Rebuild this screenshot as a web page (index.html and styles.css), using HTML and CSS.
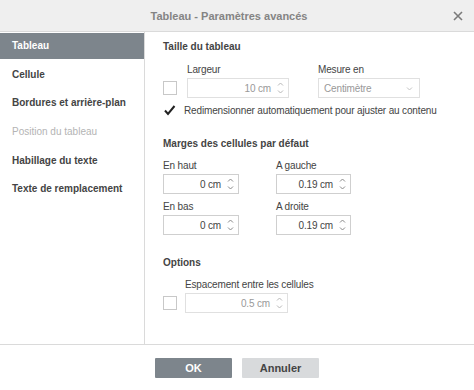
FILE: index.html
```html
<!DOCTYPE html>
<html lang="fr">
<head>
    <meta charset="UTF-8">
    <title>Tableau - Paramètres avancés</title>
    <link rel="stylesheet" href="styles.css">
</head>
<body>
    <div class="dialog">
        <div class="titlebar">
            <span class="title">Tableau - Paramètres avancés</span>
            <span class="close">
                <svg width="10" height="10" viewBox="0 0 10 10"><path d="M1 1L9 9M9 1L1 9" stroke="#7a7a7a" stroke-width="1.6"/></svg>
            </span>
        </div>

        <div class="main">
            <ul class="menu">
                <li class="active">Tableau</li>
                <li>Cellule</li>
                <li>Bordures et arrière-plan</li>
                <li class="disabled">Position du tableau</li>
                <li>Habillage du texte</li>
                <li>Texte de remplacement</li>
            </ul>

            <div class="panel">
                <h3>Taille du tableau</h3>
                <div class="size-row">
                    <span class="check"></span>
                    <div class="field w102">
                        <label>Largeur</label>
                        <div class="spin disabled"><span class="val">10 cm</span>
                            <svg class="arrows" width="7" height="14" viewBox="0 0 7 14"><path d="M1 4.5L3.5 2L6 4.5M1 9.5L3.5 12L6 9.5" fill="none" stroke="#b8b8b8" stroke-width="1"/></svg>
                        </div>
                    </div>
                    <div class="field w102">
                        <label>Mesure en</label>
                        <div class="combo disabled"><span>Centimètre</span>
                            <svg width="7" height="5" viewBox="0 0 7 5"><path d="M1 1.5L3.5 4L6 1.5" fill="none" stroke="#c4c4c4" stroke-width="1"/></svg>
                        </div>
                    </div>
                </div>
                <div class="check-row">
                    <span class="check checked">
                        <svg width="13" height="13" viewBox="0 0 13 13"><path d="M2 6.5L5 10L11.5 2" fill="none" stroke="#222" stroke-width="2"/></svg>
                    </span>
                    <span>Redimensionner automatiquement pour ajuster au contenu</span>
                </div>

                <h3 class="second">Marges des cellules par défaut</h3>
                <div class="margins">
                    <div class="field">
                        <label>En haut</label>
                        <div class="spin"><span class="val">0 cm</span>
                            <svg class="arrows" width="7" height="14" viewBox="0 0 7 14"><path d="M1 4.5L3.5 2L6 4.5M1 9.5L3.5 12L6 9.5" fill="none" stroke="#8a8a8a" stroke-width="1"/></svg>
                        </div>
                    </div>
                    <div class="field">
                        <label>A gauche</label>
                        <div class="spin"><span class="val">0.19 cm</span>
                            <svg class="arrows" width="7" height="14" viewBox="0 0 7 14"><path d="M1 4.5L3.5 2L6 4.5M1 9.5L3.5 12L6 9.5" fill="none" stroke="#8a8a8a" stroke-width="1"/></svg>
                        </div>
                    </div>
                    <div class="field">
                        <label>En bas</label>
                        <div class="spin"><span class="val">0 cm</span>
                            <svg class="arrows" width="7" height="14" viewBox="0 0 7 14"><path d="M1 4.5L3.5 2L6 4.5M1 9.5L3.5 12L6 9.5" fill="none" stroke="#8a8a8a" stroke-width="1"/></svg>
                        </div>
                    </div>
                    <div class="field">
                        <label>A droite</label>
                        <div class="spin"><span class="val">0.19 cm</span>
                            <svg class="arrows" width="7" height="14" viewBox="0 0 7 14"><path d="M1 4.5L3.5 2L6 4.5M1 9.5L3.5 12L6 9.5" fill="none" stroke="#8a8a8a" stroke-width="1"/></svg>
                        </div>
                    </div>
                </div>

                <h3 class="third">Options</h3>
                <div class="options-row">
                    <span class="check"></span>
                    <div class="field w103">
                        <label class="nowrap">Espacement entre les cellules</label>
                        <div class="spin disabled"><span class="val">0.5 cm</span>
                            <svg class="arrows" width="7" height="14" viewBox="0 0 7 14"><path d="M1 4.5L3.5 2L6 4.5M1 9.5L3.5 12L6 9.5" fill="none" stroke="#b8b8b8" stroke-width="1"/></svg>
                        </div>
                    </div>
                </div>
            </div>
        </div>

        <div class="footer">
            <button class="primary">OK</button>
            <button>Annuler</button>
        </div>
    </div>
</body>
</html>
```

FILE: styles.css
```css
body {
    margin: 0;
    font-family: "Liberation Sans", Arial, sans-serif;
    font-size: 10px;
    color: #444;
    background: #fff;
}

.dialog {
    width: 474px;
    height: 390px;
    display: flex;
    flex-direction: column;
}

.titlebar {
    height: 31px;
    background-color: #efefef;
    border-bottom: 1px solid #dadada;
    display: flex;
    align-items: center;
    padding: 0 8px;
}

.title {
    flex: 1;
    text-align: center;
    font-size: 11px;
    font-weight: bold;
    color: #848484;
}

.close {
    width: 16px;
    display: flex;
    justify-content: center;
}

.main {
    display: flex;
    height: 312px;
    border-bottom: 1px solid #dadada;
}

.menu {
    list-style: none;
    margin: 0;
    padding: 1px 0 0;
    width: 144px;
    border-right: 1px solid #dadada;
}

.menu li {
    height: 26px;
    line-height: 26px;
    margin-bottom: 2.7px;
    padding-left: 12px;
    font-weight: bold;
    color: #444;
}

.menu li.active {
    background-color: #7d858c;
    color: #fff;
}

.menu li.disabled {
    color: #b4b4b4;
    font-weight: normal;
}

.panel {
    flex: 1;
    padding: 8px 0 0 18px;
    letter-spacing: -0.15px;
}

h3 {
    margin: 0;
    font-size: 10px;
    line-height: 14px;
    font-weight: bold;
    color: #444;
    letter-spacing: 0;
}

h3.second {
    margin-top: 20px;
}

h3.third {
    margin-top: 21px;
}

label {
    display: block;
    line-height: 14px;
    margin-bottom: 1px;
}

.nowrap {
    white-space: nowrap;
}

.size-row {
    display: flex;
    align-items: flex-end;
    margin-top: 9px;
}

.size-row .field + .field {
    margin-left: 29px;
}

.w102 { width: 102px; }
.w103 { width: 103px; }

.check {
    width: 12px;
    height: 12px;
    border: 1px solid #c8c8c8;
    margin: 0 10px 3px 0;
    flex-shrink: 0;
}

.check.checked {
    border: none;
    width: 13px;
    height: 13px;
    margin: 0 8px 0 0;
}

.check-row {
    display: flex;
    align-items: center;
    margin-top: 6px;
}

.spin, .combo {
    height: 18px;
    border: 1px solid #cfcfcf;
    display: flex;
    align-items: center;
    justify-content: flex-end;
    padding-right: 4px;
    color: #444;
}

.spin.disabled, .combo.disabled {
    border-color: #e0e0e0;
    color: #999;
}

.combo {
    justify-content: space-between;
    padding-left: 5px;
    padding-right: 6px;
}

.val {
    margin-right: 6px;
}

.margins {
    display: grid;
    grid-template-columns: 76px 75px;
    column-gap: 37px;
    row-gap: 6px;
    margin-top: 8px;
}

.options-row {
    display: flex;
    align-items: flex-end;
    margin-top: 8px;
}

.options-row .check {
    margin-right: 8px;
}

.footer {
    flex: 1;
    display: flex;
    justify-content: center;
    align-items: flex-start;
    padding-top: 13px;
    gap: 10px;
}

button {
    width: 77px;
    height: 20px;
    border: none;
    border-radius: 1px;
    background-color: #d8dadc;
    color: #444;
    font-family: "Liberation Sans", Arial, sans-serif;
    font-size: 11px;
    font-weight: bold;
}

button.primary {
    background-color: #7d858c;
    color: #fff;
}
```
